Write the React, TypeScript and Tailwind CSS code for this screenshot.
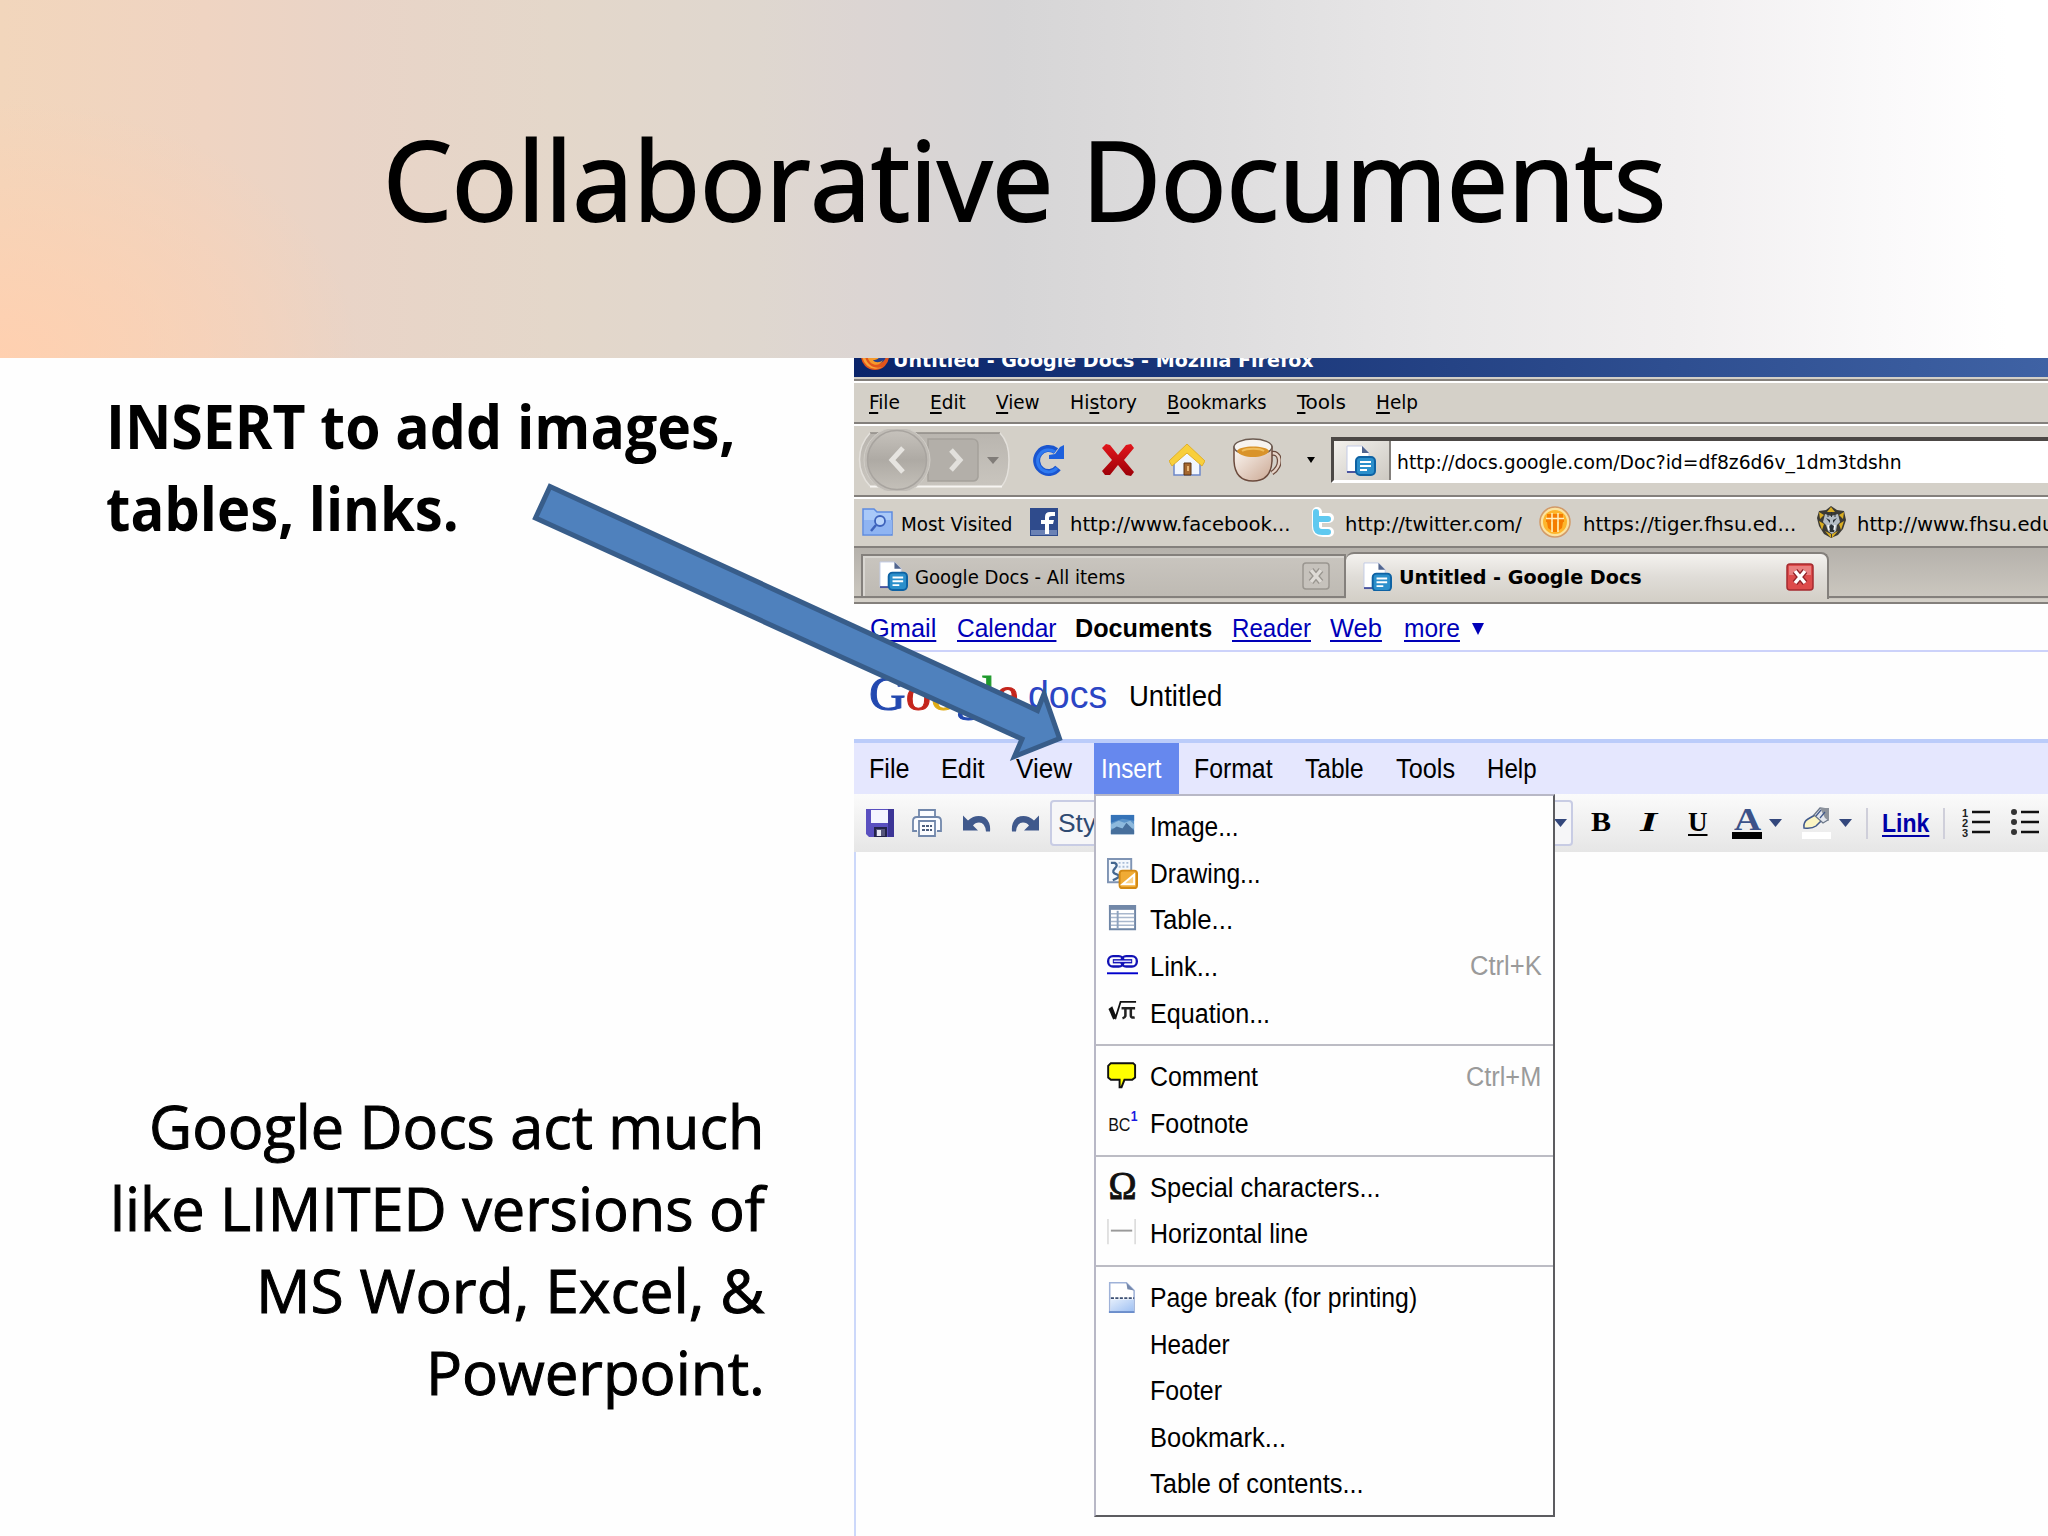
import { useLayoutEffect, useRef, useState } from "react"
import type { ReactNode } from "react"
import clsx from "clsx"

type FitProps = { children: ReactNode; className?: string; underline?: boolean }

// Single line of text squeezed or stretched to the width of its box
function Fit({ children, className, underline }: FitProps) {
  const box = useRef<HTMLSpanElement>(null)
  const text = useRef<HTMLSpanElement>(null)
  const [scale, setScale] = useState(1)

  useLayoutEffect(() => {
    if (box.current && text.current) {
      setScale(box.current.clientWidth / text.current.offsetWidth)
    }
  }, [])

  return (
    <span ref={box} className={clsx("block shrink-0 whitespace-nowrap", className)}>
      <span
        ref={text}
        className={clsx("inline-block origin-left", underline && "underline decoration-2 underline-offset-[3px] [text-decoration-skip-ink:none]")}
        style={{ transform: `scaleX(${scale})` }}
      >
        {children}
      </span>
    </span>
  )
}

function Caret({ className }: { className?: string }) {
  return (
    <svg viewBox="0 0 14 9" preserveAspectRatio="none" className={clsx("shrink-0", className)}>
      <path d="M0 0h14L7 9z" fill="currentColor" />
    </svg>
  )
}

function DocIcon({ className }: { className?: string }) {
  return (
    <svg viewBox="0 0 30 31" className={clsx("shrink-0", className)}>
      <path d="M1 1h15l7 7v19H1z" fill="#fff" stroke="#c3cbe6" strokeWidth="1" />
      <path d="M1 27h11" stroke="#4a55a0" strokeWidth="2" />
      <path d="M16 1l7 7h-7z" fill="#51658f" />
      <rect x="10" y="12" width="19" height="18" rx="4" fill="#2b8fcb" stroke="#0e62a3" strokeWidth="2" />
      <path d="M14 17h11M14 21h11M14 25h7" stroke="#fff" strokeWidth="2" />
    </svg>
  )
}

function FirefoxIcon() {
  return (
    <svg viewBox="0 0 30 30" className="-mt-[22px] ml-[6px] size-[30px] shrink-0">
      <circle cx="15" cy="14" r="14" fill="#e2551c" />
      <path d="M3 8a14 14 0 0 0 20 17C14 28 6 22 5 14z" fill="#f7a13a" />
      <circle cx="17" cy="13" r="9" fill="#23408f" />
      <path d="M7 13c5 0 8 2 13 0-1 4-3 5-7 5 2 3 7 3 10 0-3 7-14 7-16-5z" fill="#f59a2c" />
    </svg>
  )
}

function NavButtons() {
  return (
    <svg viewBox="0 0 152 62" className="ml-[4px] h-[62px] w-[152px] shrink-0">
      <defs>
        <linearGradient id="nav" x1="0" y1="0" x2="0" y2="1">
          <stop offset="0" stopColor="#b9b5af" />
          <stop offset="1" stopColor="#c9c5be" />
        </linearGradient>
        <linearGradient id="disc" x1="0" y1="0" x2="0" y2="1">
          <stop offset="0" stopColor="#c6c2bc" />
          <stop offset="0.5" stopColor="#aeaaa4" />
          <stop offset="1" stopColor="#c4c0b9" />
        </linearGradient>
      </defs>
      <path d="M12 4h130c6 6 9 15 9 27s-3 21-7 26H12C-2 42-2 19 12 4z" fill="url(#nav)" />
      <path d="M12 4h130" stroke="#908c87" strokeWidth="1.5" />
      <path d="M142 4c6 6 9 15 9 27s-3 21-7 26M12 57C-2 42-2 19 12 4" fill="none" stroke="#e4e1dc" strokeWidth="1.5" />
      <path d="M12 57.500h132" stroke="#f7f5f2" strokeWidth="2" />
      <path d="M70 10h44q6 0 6 6v32q-1 4-5 4H70z" fill="#b3afa9" stroke="#a5a19b" strokeWidth="1.500" />
      <circle cx="39" cy="31" r="33" fill="#c1bdb7" stroke="#d0cdc7" />
      <circle cx="39" cy="31" r="29.500" fill="url(#disc)" stroke="#a8a49f" strokeWidth="1.500" />
      <path d="M45 19L34 31l11 12" fill="none" stroke="#e6e4e0" strokeWidth="5" />
      <path d="M93 21l9 10-9 10" fill="none" stroke="#e2e0dc" strokeWidth="5" />
      <path d="M129 28h12l-6 7z" fill="#807c78" />
    </svg>
  )
}

function ReloadIcon() {
  return (
    <svg viewBox="0 0 32 32" className="ml-[22px] size-[32px] shrink-0">
      <path d="M26 24a12 12 0 1 1-2-17" fill="none" stroke="#1a55cf" strokeWidth="7" />
      <path d="M25 24a11 11 0 1 1-2-16" fill="none" stroke="#2f7af0" strokeWidth="3" />
      <path d="M32 1v14H17v-4l6-1 5-7z" fill="#1d60dc" />
    </svg>
  )
}

function StopIcon() {
  return (
    <svg viewBox="0 0 32 32" className="ml-[38px] size-[32px] shrink-0">
      <defs>
        <linearGradient id="stop" x1="0" y1="0" x2="0" y2="1">
          <stop offset="0" stopColor="#e2161c" />
          <stop offset="1" stopColor="#9c0008" />
        </linearGradient>
      </defs>
      <path d="M4 0l4 1 8 10 8-10 5-1 3 4-10 12 10 12-3 4-5-1-8-10-8 10-5 0-3-4L10 16 0 4z" fill="url(#stop)" />
    </svg>
  )
}

function HomeIcon() {
  return (
    <svg viewBox="0 0 36 32" className="ml-[35px] h-[32px] w-[36px] shrink-0">
      <path d="M5 16L18 6l13 10v15H5z" fill="#f1f6ff" stroke="#6d88c9" strokeWidth="1.500" />
      <path d="M18 0l18 17-3 5L18 9 3 22l-3-5z" fill="#f8cf3c" stroke="#e0b02c" strokeWidth="1" />
      <path d="M15 19h7v12h-7z" fill="#a5672f" stroke="#5a3515" />
      <path d="M19 22v5" stroke="#e9b777" strokeWidth="2" />
    </svg>
  )
}

function MugIcon() {
  return (
    <svg viewBox="0 0 48 44" className="ml-[28px] h-[44px] w-[48px] shrink-0">
      <defs>
        <linearGradient id="mug" x1="0" y1="0" x2="1" y2="1">
          <stop offset="0" stopColor="#fdf9f5" />
          <stop offset="1" stopColor="#cba893" />
        </linearGradient>
      </defs>
      <path d="M37 16c11-4 13 12 2 19" fill="none" stroke="#6b4a3c" strokeWidth="5" />
      <path d="M37 16c11-4 13 12 2 19" fill="none" stroke="#e6d3c7" strokeWidth="2.500" />
      <path d="M1 9v14q1 20 19 20t19-20V9z" fill="url(#mug)" stroke="#6b4a3c" strokeWidth="1.500" />
      <ellipse cx="20" cy="9" rx="19" ry="8" fill="#f7f3ef" stroke="#6b5a50" strokeWidth="1.500" />
      <path d="M4 13c2-6 30-6 32 0-4 8-28 8-32 0z" fill="#d9932a" />
      <path d="M9 13c5-3 18-3 22 0" fill="none" stroke="#f0bd5c" strokeWidth="2" />
    </svg>
  )
}

function FolderIcon() {
  return (
    <svg viewBox="0 0 32 28" className="ml-[8px] h-[28px] w-[32px] shrink-0">
      <path d="M1 1h11l3 3h15v23H1z" fill="#a9c9f8" stroke="#5d8be0" strokeWidth="1.500" />
      <path d="M2 12h28v14H2z" fill="#8fb4f2" />
      <circle cx="18" cy="13" r="5" fill="#b9d4fb" stroke="#3d62bb" strokeWidth="1.800" />
      <path d="M14 17l-5 6" stroke="#3d62bb" strokeWidth="2.500" />
    </svg>
  )
}

function FacebookIcon() {
  return (
    <svg viewBox="0 0 28 28" className="ml-[18px] size-[28px] shrink-0">
      <path d="M0 0h28v28H0z" fill="#2f4b8c" />
      <path d="M1 22h26v5H1z" fill="#6b82b5" />
      <path d="M15 26V16h-4v-4h4V9q0-5 5-5h5v4h-3q-3 0-3 2v2h5l-1 4h-4v10z" fill="#fff" />
    </svg>
  )
}

function TwitterIcon() {
  return (
    <svg viewBox="0 0 26 30" className="ml-[19px] h-[30px] w-[26px] shrink-0">
      <path d="M8 5v15q0 5 6 5h6M8 11h12" fill="none" stroke="#fff" strokeWidth="10" strokeLinecap="round" strokeLinejoin="round" />
      <path d="M7 5v14q0 6 6 6h6M8 12h11" fill="none" stroke="#5fc9f0" strokeWidth="6" strokeLinecap="round" strokeLinejoin="round" />
    </svg>
  )
}

function TigerIcon() {
  return (
    <svg viewBox="0 0 32 32" className="ml-[17px] size-[32px] shrink-0">
      <circle cx="16" cy="16" r="15" fill="#fbe3a0" stroke="#d29a68" strokeWidth="1.500" />
      <circle cx="16" cy="16" r="12" fill="#fdb52c" />
      <path d="M8 8h16v4H8zM7 13h18v3H7zM8 16h4l1 9-4-3zM14 16h4v10h-4zM20 16h4l-1 6-4 3z" fill="#f57c00" />
      <path d="M13 7v19M19 7v19M7 12.500h18" stroke="#fff0c0" strokeWidth="1.500" />
    </svg>
  )
}

function ShieldIcon() {
  return (
    <svg viewBox="0 0 29 32" className="ml-[21px] h-[32px] w-[29px] shrink-0">
      <path d="M2 5l7-1 5-4 6 4 7 1 2 9-3 9-5 6-7 3-7-4-5-8-2-8z" fill="#3c3a34" />
      <path d="M2 6l5 3-4 4zM27 6l-5 3 4 4zM2 15l5 3-2 6zM27 15l-5 3 2 6zM8 25l6 3v4zM21 25l-6 3v4zM14 1l4 5h-8z" fill="#d9ad22" />
      <path d="M8 8l6 2 7-2 2 8-3 3-1 6-4 3-4-3-2-6-3-3z" fill="#b4bcc4" />
      <path d="M9 12l4 2v3zM20 12l-4 2v3zM12 21l2-3 4 3-1 5h-4z" fill="#2a3036" />
      <path d="M14.500 6v5M11 7v4M18 7v4" stroke="#2a3036" />
      <path d="M11 19l1 5M18 19l-1 5" stroke="#f4f6f8" strokeWidth="1.500" />
    </svg>
  )
}

function CloseIcon({ active, className }: { active?: boolean; className?: string }) {
  return (
    <svg viewBox="0 0 28 28" className={clsx("size-[28px] shrink-0", className)}>
      <rect x="1" y="1" width="26" height="26" rx="3" fill={active ? "#dd4b4b" : "#c6c2bc"} stroke={active ? "#a52a2f" : "#9a9690"} strokeWidth="1.500" />
      {active && <path d="M3 3h22v9H3z" fill="#e98080" />}
      <path d="M9 8l10 12M19 8L9 20" stroke={active ? "#8f2328" : "#9a9690"} strokeWidth="6" />
      <path d="M9 8l10 12M19 8L9 20" stroke={active ? "#fff" : "#dedbd6"} strokeWidth="3.500" />
    </svg>
  )
}

const browserMenus = [
  { key: "F", rest: "ile", className: "ml-[15px] w-[31px]" },
  { key: "E", rest: "dit", className: "ml-[30px] w-[36px]" },
  { key: "V", rest: "iew", className: "ml-[30px] w-[44px]" },
  { pre: "Hi", key: "s", rest: "tory", className: "ml-[30px] w-[67px]" },
  { key: "B", rest: "ookmarks", className: "ml-[30px] w-[100px]" },
  { key: "T", rest: "ools", className: "ml-[30px] w-[49px]" },
  { key: "H", rest: "elp", className: "ml-[30px] w-[42px]" },
]

function Browser() {
  return (
    <div className="font-['DejaVu_Sans_Condensed','DejaVu_Sans',sans-serif] text-[20px] text-black">
      <div className="flex h-[19px] items-center overflow-hidden bg-gradient-to-r from-[#0a246a] via-[#254385] to-[#3f62a4]">
        <FirefoxIcon />
        <Fit className="-mt-[16px] ml-[3px] w-[421px] font-bold text-white">Untitled - Google Docs - Mozilla Firefox</Fit>
      </div>
      <div className="h-[2px] bg-[#d4d0c8]" />
      <div className="h-[2px] bg-[#84807c]" />

      <div className="flex h-[41px] items-center border-t-2 border-white bg-[#d4d0c8]">
        {browserMenus.map((m) => (
          <Fit key={m.key} className={clsx("-mt-[2px]", m.className)}>
            {m.pre}
            <span className="underline decoration-2 underline-offset-[3px]">{m.key}</span>
            {m.rest}
          </Fit>
        ))}
      </div>

      <div className="flex h-[73px] items-center border-t-2 border-[#84807c] bg-[#d4d0c8] shadow-[inset_0_2px_0_#fff]">
        <NavButtons />
        <ReloadIcon />
        <StopIcon />
        <HomeIcon />
        <MugIcon />
        <Caret className="ml-[26px] h-[6px] w-[8px]" />
        <div className="ml-[16px] flex h-[46px] flex-1 items-center border-3 border-r-0 border-t-4 border-b-white border-l-[#4c4845] border-t-[#4c4845] bg-white">
          <div className="flex h-full w-[57px] shrink-0 items-center border-r-2 border-[#84807c] bg-gradient-to-br from-[#f3f1ed] to-[#cdc9c2]">
            <DocIcon className="ml-[12px] w-[30px]" />
          </div>
          <Fit className="mt-[4px] ml-[6px] w-[505px]">http://docs.google.com/Doc?id=df8z6d6v_1dm3tdshn</Fit>
        </div>
      </div>

      <div className="flex h-[51px] items-center overflow-hidden border-t-2 border-[#84807c] bg-[#d4d0c8] shadow-[inset_0_2px_0_#fff]">
        <FolderIcon />
        <Fit className="mt-[4px] ml-[7px] w-[111px]">Most Visited</Fit>
        <FacebookIcon />
        <Fit className="mt-[4px] ml-[12px] w-[220px]">http://www.facebook...</Fit>
        <TwitterIcon />
        <Fit className="mt-[4px] ml-[10px] w-[177px]">http://twitter.com/</Fit>
        <TigerIcon />
        <Fit className="mt-[4px] ml-[12px] w-[213px]">https://tiger.fhsu.ed...</Fit>
        <ShieldIcon />
        <Fit className="mt-[4px] ml-[11px] w-[197px]">http://www.fhsu.edu</Fit>
      </div>

      <div className="flex h-[53px] items-end border-t-2 border-[#84807c] bg-gradient-to-b from-[#b5b1ab] to-[#ccc8c0]">
        <div className="mb-[1px] h-[43px] w-[7px] border-b-2 border-[#84807c]" />
        <div className="mb-[1px] flex h-[44px] w-[485px] items-center border-2 border-[#84807c] bg-gradient-to-b from-[#c9c5bf] to-[#bebab3] shadow-[inset_2px_2px_0_#d9d6d1]">
          <DocIcon className="ml-[16px] w-[29px]" />
          <Fit className="mt-[2px] ml-[7px] w-[210px]">Google Docs - All items</Fit>
          <CloseIcon className="ml-[177px]" />
        </div>
        <div className="flex h-[47px] w-[483px] items-center rounded-t-lg border-t-2 border-r-2 border-[#84807c] bg-gradient-to-b from-[#f4f2ef] via-[#e0ddd8] to-[#d4d0c8]">
          <DocIcon className="ml-[17px] w-[29px]" />
          <Fit className="mt-[1px] ml-[7px] w-[243px] font-bold">Untitled - Google Docs</Fit>
          <CloseIcon active className="ml-[144px]" />
        </div>
        <div className="mb-[1px] h-[43px] flex-1 border-b-2 border-[#84807c]" />
      </div>
      <div className="h-[5px] border-b-2 border-[#84807c] bg-[#d4d0c8]" />
    </div>
  )
}

const docIcons: Record<string, ReactNode> = {
  image: (
    <>
      <path d="M2 2h12v10H2z" fill="#5b93c9" />
      <path d="M2 2h12v3L8 4 2 6z" fill="#3573b8" />
      <path d="M2 7l4-2 3 1 3-1 2 2v2H2z" fill="#8db9dd" />
      <path d="M2 10l3-2 3 1 2-3 4 4v2H2z" fill="#476f9c" />
    </>
  ),
  drawing: (
    <>
      <path d="M.5.5h12v12H.5z" fill="#f4f8fd" stroke="#7f94b4" />
      <path d="M2 2.500h2q2 1 0 3t1 3-2 3" fill="none" stroke="#41658f" strokeWidth="1.200" />
      <path d="M6 2.500h6M6 4.500h6" stroke="#a9bdd8" strokeDasharray="1 1" />
      <rect x="6.500" y="6.500" width="9" height="9" rx="1.500" fill="#f0ab35" stroke="#d38913" />
      <path d="M8 13.500h6v-5z" fill="#f9d38c" stroke="#fff" />
    </>
  ),
  table: (
    <>
      <path d="M1.500.5h13v12h-13z" fill="#fff" stroke="#6f86a6" />
      <path d="M1 0h14v2.500H1z" fill="#7288a8" />
      <path d="M2 4.500h12M2 6.500h12M2 8.500h12M2 10.500h12" stroke="#a9b8cd" strokeWidth=".8" />
      <path d="M5.500 3v9" stroke="#8ea2bd" />
    </>
  ),
  link: (
    <>
      <rect x=".6" y="2.600" width="8" height="5.400" rx="2.500" fill="none" stroke="#1111b5" strokeWidth="1.200" />
      <rect x="7.400" y="2.600" width="8" height="5.400" rx="2.500" fill="none" stroke="#1111b5" strokeWidth="1.200" />
      <path d="M3 5.300h10" stroke="#1111b5" strokeWidth="2.200" />
      <path d="M3.500 5.300h9" stroke="#d5d5ff" strokeWidth=".8" />
      <path d="M0 11.500h16" stroke="#0000cc" />
    </>
  ),
  equation: (
    <>
      <path d="M1 6l1.500-1 2 5 2.500-8h8" fill="none" stroke="#111" strokeWidth=".9" />
      <path d="M1.700 5.500l2.300 5.300" stroke="#111" strokeWidth="1.800" />
      <path d="M7.500 5.300h7M9.500 5.500v3.500q0 1-1.500 1.500M12.300 5.500V9q0 1.500 2 1" fill="none" stroke="#222" strokeWidth="1.300" />
    </>
  ),
  comment: <path d="M2 .6h11.500l1 1V8l-1.500 1.200H9L7.500 13h-1V9.200H2L.6 8V2z" fill="#ff0" stroke="#111" />,
  footnote: (
    <>
      <text x=".6" y="12" fontSize="9.500" textLength="11.500" lengthAdjust="spacingAndGlyphs" fill="#111">BC</text>
      <text x="12.300" y="6.500" fontSize="8" textLength="3.500" lengthAdjust="spacingAndGlyphs" fontWeight="bold" fill="#1a1ae0">1</text>
    </>
  ),
  omega: (
    <text x=".8" y="14" fontSize="20.500" textLength="14.500" lengthAdjust="spacingAndGlyphs" fontFamily="Liberation Serif" fill="#111" stroke="#111" strokeWidth=".5">Ω</text>
  ),
  rule: (
    <>
      <path d="M.5 0v13M14.500 0v13" stroke="#d4d4d4" strokeWidth=".7" />
      <path d="M2 6h11" stroke="#9a9a9a" />
    </>
  ),
  pageBreak: (
    <>
      <defs>
        <linearGradient id="page" x1="0" y1="0" x2="1" y2="1">
          <stop offset="0" stopColor="#e4eefc" />
          <stop offset="1" stopColor="#9dbff2" />
        </linearGradient>
      </defs>
      <path d="M1.400.4h8.600l4 4v11.200H1.400z" fill="#fff" stroke="#9fb2d8" strokeWidth=".8" />
      <path d="M1.800 9h12v6.500h-12z" fill="url(#page)" />
      <path d="M10 .4l4 4-3.500-.6z" fill="#7588ab" />
      <path d="M2 8.300h12" stroke="#3d5073" strokeDasharray="1.600 .7" strokeWidth=".9" />
      <path d="M1 15.500h13" stroke="#6c8ecb" />
    </>
  ),
}

type InsertItem = { label: string; className: string; icon?: string; shortcut?: string; shortcutClass?: string }

const insertGroups: InsertItem[][] = [
  [
    { label: "Image...", className: "w-[89px]", icon: "image" },
    { label: "Drawing...", className: "w-[111px]", icon: "drawing" },
    { label: "Table...", className: "w-[83px]", icon: "table" },
    { label: "Link...", className: "w-[68px]", icon: "link", shortcut: "Ctrl+K", shortcutClass: "w-[72px] mr-[11px]" },
    { label: "Equation...", className: "w-[120px]", icon: "equation" },
  ],
  [
    { label: "Comment", className: "w-[108px]", icon: "comment", shortcut: "Ctrl+M", shortcutClass: "w-[75px] mr-[12px]" },
    { label: "Footnote", className: "w-[99px]", icon: "footnote" },
  ],
  [
    { label: "Special characters...", className: "w-[231px]", icon: "omega" },
    { label: "Horizontal line", className: "w-[158px]", icon: "rule" },
  ],
  [
    { label: "Page break (for printing)", className: "w-[267px]", icon: "pageBreak" },
    { label: "Header", className: "w-[80px]" },
    { label: "Footer", className: "w-[72px]" },
    { label: "Bookmark...", className: "w-[136px]" },
    { label: "Table of contents...", className: "w-[214px]" },
  ],
]

function InsertMenu() {
  return (
    <div className="absolute top-full left-0 z-10 w-[461px] border-2 border-t-[#b8b8c6] border-r-[#5c5c60] border-b-[#5c5c60] border-l-[#b8b8c6] bg-[#fefefe] text-black">
      {insertGroups.map((group, i) => (
        <div key={i} className={clsx("py-[7.600px]", i > 0 && "border-t-2 border-[#bcbcc4]")}>
          {group.map((item) => (
            <div key={item.label} className="flex h-[46.600px] items-center">
              <svg viewBox="0 0 16 16" className="ml-[11px] size-[31px] shrink-0">
                {item.icon && docIcons[item.icon]}
              </svg>
              <Fit className={clsx("mt-[1px] ml-[12px]", item.className)}>{item.label}</Fit>
              {item.shortcut && (
                <div className="ml-auto text-[#9a9a9a]">
                  <Fit className={item.shortcutClass}>{item.shortcut}</Fit>
                </div>
              )}
            </div>
          ))}
        </div>
      ))}
    </div>
  )
}

function GoogleBar() {
  return (
    <div className="flex h-[48px] items-center border-b-2 border-[#ccd2fa] pt-[3px] text-[25px] text-[#0000b8]">
      <Fit underline className="ml-[16px] w-[66px]">Gmail</Fit>
      <Fit underline className="ml-[21px] w-[99px]">Calendar</Fit>
      <Fit className="ml-[19px] w-[137px] font-bold text-black">Documents</Fit>
      <Fit underline className="ml-[20px] w-[79px]">Reader</Fit>
      <Fit underline className="ml-[19px] w-[52px]">Web</Fit>
      <Fit underline className="ml-[22px] w-[56px]">more</Fit>
      <Caret className="ml-[12px] h-[12px] w-[12px]" />
    </div>
  )
}

function DocsHeader() {
  return (
    <div className="flex h-[87px] items-center">
      <Fit className="-mt-[3px] ml-[15px] w-[149px] font-['Liberation_Serif',serif] text-[48px] leading-none [-webkit-text-stroke:1px]">
        <span className="text-[#2349b0]">G</span>
        <span className="text-[#c4251c]">o</span>
        <span className="text-[#e0ac16]">o</span>
        <span className="text-[#2349b0]">g</span>
        <span className="text-[#1f9a2c]">l</span>
        <span className="text-[#c4251c]">e</span>
      </Fit>
      <Fit className="-mt-[2px] ml-[10px] w-[79px] text-[38px] leading-none text-[#2b45c4]">docs</Fit>
      <Fit className="mt-[3px] ml-[22px] w-[93px] text-[29px]">Untitled</Fit>
    </div>
  )
}

function MenuBar() {
  return (
    <div className="flex h-[55px] items-center border-t-4 border-[#bbccfa] bg-[#e5e7fe]">
      <Fit className="mt-[2px] ml-[15px] w-[41px]">File</Fit>
      <Fit className="mt-[2px] ml-[31px] w-[44px]">Edit</Fit>
      <Fit className="mt-[2px] ml-[31px] w-[56px]">View</Fit>
      <div className="relative ml-[22px] flex h-full w-[85px] items-center bg-[#6688ee] text-white">
        <Fit className="mt-[2px] ml-[7px] w-[61px]">Insert</Fit>
        <InsertMenu />
      </div>
      <Fit className="mt-[2px] ml-[15px] w-[79px]">Format</Fit>
      <Fit className="mt-[2px] ml-[32px] w-[59px]">Table</Fit>
      <Fit className="mt-[2px] ml-[32px] w-[59px]">Tools</Fit>
      <Fit className="mt-[2px] ml-[32px] w-[50px]">Help</Fit>
    </div>
  )
}

function FormatBar() {
  return (
    <div className="flex h-[58px] items-center bg-gradient-to-b from-[#fbfbfb] to-[#e6e6e6]">
      <svg viewBox="0 0 28 28" className="ml-[12px] size-[28px] shrink-0">
        <path d="M0 0h28v28H3l-3-3z" fill="#5a50c0" />
        <path d="M22 0h6v28h-6z" fill="#3c3596" />
        <path d="M5 1h17v13H5z" fill="#f4f5ff" />
        <path d="M8 18h13v10H8z" fill="#23234a" />
        <path d="M10 20h9v7h-9z" fill="#55557a" />
        <path d="M11 21h4v6h-4z" fill="#e8e8f4" />
      </svg>
      <svg viewBox="0 0 30 28" className="ml-[18px] h-[28px] w-[30px] shrink-0" fill="#fbfcff" stroke="#7187ab" strokeWidth="1.800">
        <path d="M7 8V1h16v7" />
        <path d="M5 22H1V12q0-4 4-4h20q4 0 4 4v10h-4" />
        <path d="M7 12h16v15H7z" />
        <path d="M10 17h10M10 21h10" strokeDasharray="3 1" stroke="#4c5d7c" />
      </svg>
      <svg viewBox="0 0 28 16" className="mt-[1px] ml-[21px] h-[17px] w-[28px] shrink-0">
        <path d="M0 0l5 5q8-7 17-3 6 5 5 14h-4q-1-9-7-9-4 0-6 3l5 5H0z" fill="#40598c" />
      </svg>
      <svg viewBox="0 0 28 16" className="mt-[1px] ml-[20px] h-[17px] w-[28px] shrink-0">
        <path d="M28 0l-5 5q-8-7-17-3-6 5-5 14h4q1-9 7-9 4 0 6 3l-5 5h15z" fill="#40598c" />
      </svg>
      {/* style and font selects, their middle hidden by the open menu */}
      <div className="ml-[11px] flex h-[46px] w-[523px] items-center justify-between rounded-sm border-2 border-[#c8cce4] bg-[#f6f6f8] text-[26px] text-[#2f4a72]">
        <Fit className="ml-[6px] w-[72px]">Styles</Fit>
        <Caret className="mr-[4px] h-[8px] w-[13px] text-[#33477c]" />
      </div>
      <div className="flex h-full items-center font-['Liberation_Serif',serif] text-[27px] font-bold">
        <Fit className="-mt-[1px] ml-[18px] w-[20px]">B</Fit>
        <Fit className="-mt-[1px] ml-[29px] w-[18px] italic">I</Fit>
        <Fit underline className="-mt-[1px] ml-[30px] w-[20px]">U</Fit>
      </div>
      <div className="ml-[24px] flex h-[32px] w-[30px] flex-col items-center justify-between">
        <Fit className="w-[27px] font-['Liberation_Serif',serif] text-[32px] leading-[24px] font-bold text-[#3c5288]">A</Fit>
        <div className="h-[7px] w-full bg-black" />
      </div>
      <Caret className="ml-[7px] h-[8px] w-[13px] text-[#33477c]" />
      <div className="ml-[20px] flex h-[32px] w-[29px] flex-col justify-between">
        <svg viewBox="0 0 28 23" className="h-[23px] w-[28px]">
          <path d="M2 21q-1-6 4-9l7-4 7 5-6 6q-4 3-12 2z" fill="#fbf5c4" stroke="#40598c" strokeWidth="1.500" />
          <path d="M12 8l6-7 8 1v11l-5 3z" fill="#e3e7ee" stroke="#6a7688" strokeWidth="1.300" />
          <path d="M18 1h9v13l-4-3z" fill="#8d939c" />
          <path d="M14 9l5-6M18 11l5-6" stroke="#40598c" strokeWidth="1.200" />
        </svg>
        <div className="h-[7px] w-full bg-white" />
      </div>
      <Caret className="ml-[8px] h-[8px] w-[13px] text-[#33477c]" />
      <div className="ml-[14px] h-[31px] w-[2px] bg-[#cfcfda]" />
      <Fit underline className="mt-[2px] ml-[14px] w-[47px] text-[25px] font-bold text-[#0000a8]">Link</Fit>
      <div className="ml-[14px] h-[31px] w-[2px] bg-[#cfcfda]" />
      <svg viewBox="0 0 28 28" className="ml-[17px] size-[28px] shrink-0">
        <path d="M10 3h18M10 13h18M10 23h18" stroke="#111" strokeWidth="2.500" />
        <g fontSize="11" fontWeight="bold" fill="#222">
          <text x="0" y="8">1</text>
          <text x="0" y="18">2</text>
          <text x="0" y="28">3</text>
        </g>
      </svg>
      <svg viewBox="0 0 28 28" className="ml-[21px] size-[28px] shrink-0">
        <path d="M10 3h18M10 13h18M10 23h18" stroke="#111" strokeWidth="2.500" />
        <path d="M3 3h.01M3 13h.01M3 23h.01" stroke="#333" strokeWidth="6" strokeLinecap="round" />
      </svg>
    </div>
  )
}

function Arrow() {
  return (
    <svg viewBox="0 0 540 290" className="absolute top-[475px] left-[528px] z-20 h-[290px] w-[540px]">
      <path
        d="M22 11.500L509.500 235.500 516 219 531.500 263.500 486.500 281.500 494 264 7.500 43z"
        fill="#4f81bd"
        stroke="#385d8a"
        strokeWidth="5"
      />
    </svg>
  )
}

export default function App() {
  return (
    <div className="relative h-[1536px] w-[2048px] overflow-hidden bg-[#fefefe] [font-variant-ligatures:none]">
      <header className="flex h-[358px] items-center justify-center bg-[radial-gradient(ellipse_360px_260px_at_0_100%,#ffd0b0_0%,#ffd0b000_100%),linear-gradient(to_right,#f2d6bc_0%,#efd4c2_10%,#e9d4c7_17%,#e4d7ca_27%,#dfd7cf_37%,#dcd5d3_42%,#d6d5d6_49%,#dddcdd_58%,#e8e7e8_70%,#f1eff0_82%,#faf9fa_92%,#ffffff_98%)] font-['Open_Sans',sans-serif]">
        <Fit className="w-[1283px] text-[109px] [-webkit-text-stroke:2px]">Collaborative Documents</Fit>
      </header>
      <div className="flex h-[1178px]">
        <section className="flex w-[854px] shrink-0 flex-col pt-[27px] pl-[106px] font-['Open_Sans',sans-serif] text-[60px] leading-[82px]">
          <div className="font-bold">
            <Fit className="w-[630px]">INSERT to add images,</Fit>
            <Fit className="w-[353px]">tables, links.</Fit>
          </div>
          <div className="mt-[536px] mr-[89px] flex flex-col items-end [-webkit-text-stroke:1px]">
            <Fit className="mr-[1px] w-[615px]">Google Docs act much</Fit>
            <Fit className="w-[655px]">like LIMITED versions of</Fit>
            <Fit className="mr-[1px] w-[508px]">MS Word, Excel, &amp;</Fit>
            <Fit className="w-[339px]">Powerpoint.</Fit>
          </div>
        </section>
        <section className="flex w-[1194px] flex-col">
          <Browser />
          <div className="flex flex-1 flex-col font-['Liberation_Sans',sans-serif] text-[27px] text-black">
            <GoogleBar />
            <DocsHeader />
            <MenuBar />
            <FormatBar />
            <div className="flex-1 border-l-2 border-[#ccd8fa]" />
          </div>
        </section>
      </div>
      <Arrow />
    </div>
  )
}
